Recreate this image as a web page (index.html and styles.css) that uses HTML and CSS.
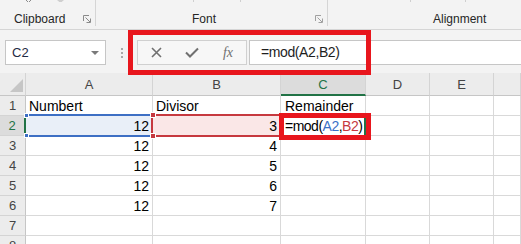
FILE: index.html
```html
<!DOCTYPE html>
<html lang="en">
<head>
  <meta charset="UTF-8" />
  <title>MOD formula</title>
  <link rel="stylesheet" href="styles.css">
</head>
<body>
  <div class="ribbon">
    <div class="group clip">
      <svg class="stub" width="95" height="4"><path d="M26 0 L28.5 2.5 L31 0" fill="none" stroke="#8a8a8a"/><path d="M57 0 H64 L60.5 3 Z" fill="#cfcfcf"/></svg>
      <div class="cap"><span>Clipboard</span><svg class="launch" width="8" height="8"><path d="M0.5 6V0.5H6" fill="none" stroke="#8a8a8a"/><path d="M2.5 2.5L7 7M3.5 7.5H7.5V3.5" fill="none" stroke="#8a8a8a"/></svg></div>
    </div>
    <div class="group font">
      <svg class="stub" width="231" height="4"><path d="M97.5 0V2M144.5 0V2" stroke="#cfcfcf"/></svg>
      <div class="cap"><span class="lbl-font">Font</span><svg class="launch" width="8" height="8"><path d="M0.5 6V0.5H6" fill="none" stroke="#a0a0a0"/><path d="M2.5 2.5L7 7M3.5 7.5H7.5V3.5" fill="none" stroke="#a0a0a0"/></svg></div>
    </div>
    <div class="group align">
      <svg class="stub" width="193" height="4"><path d="M82.5 0V2M137.5 0V2" stroke="#cfcfcf"/></svg>
      <div class="cap"><span class="lbl-align">Alignment</span></div>
    </div>
  </div>

  <div class="fbar">
    <div class="namebox"><span>C2</span><i class="caret"></i></div>
    <div class="grip"><i></i><i></i><i></i></div>
    <div class="btns">
      <span class="btn"><svg width="11" height="11"><path d="M1 1L10 10M10 1L1 10" stroke="#707070" stroke-width="1.6"/></svg></span>
      <span class="btn"><svg width="14" height="11"><path d="M1 5.5L5 9.5L13 1.5" fill="none" stroke="#707070" stroke-width="2"/></svg></span>
      <span class="btn fx">fx</span>
    </div>
    <div class="finput">=mod(A2,B2)</div>
    <div class="mark mark-bar"></div>
  </div>

  <div class="sheet">
    <div class="hd corner"><svg width="25" height="22"><path d="M10 19H23V6Z" fill="#c6c6c6"/></svg></div>
    <div class="hd">A</div>
    <div class="hd">B</div>
    <div class="hd on">C</div>
    <div class="hd">D</div>
    <div class="hd">E</div>
    <div class="hd"></div>

    <div class="rh">1</div>
    <div class="c">Numbert</div>
    <div class="c">Divisor</div>
    <div class="c cc">Remainder</div>
    <div class="c"></div><div class="c"></div><div class="c"></div>

    <div class="rh on">2</div>
    <div class="c num ref-a">12<i class="h tl"></i><i class="h bl"></i></div>
    <div class="c num ref-b">3<i class="h tl"></i><i class="h bl"></i></div>
    <div class="c cc edit">=mod(<span class="blue">A2</span>,<span class="red">B2</span>)</div>
    <div class="c"></div><div class="c"></div><div class="c"></div>

    <div class="rh">3</div>
    <div class="c num">12</div><div class="c num">4</div>
    <div class="c"></div><div class="c"></div><div class="c"></div><div class="c"></div>

    <div class="rh">4</div>
    <div class="c num">12</div><div class="c num">5</div>
    <div class="c"></div><div class="c"></div><div class="c"></div><div class="c"></div>

    <div class="rh">5</div>
    <div class="c num">12</div><div class="c num">6</div>
    <div class="c"></div><div class="c"></div><div class="c"></div><div class="c"></div>

    <div class="rh">6</div>
    <div class="c num">12</div><div class="c num">7</div>
    <div class="c"></div><div class="c"></div><div class="c"></div><div class="c"></div>

    <div class="rh">7</div>
    <div class="c"></div><div class="c"></div><div class="c"></div>
    <div class="c"></div><div class="c"></div><div class="c"></div>

    <div class="rh">8</div>
    <div class="c"></div><div class="c"></div><div class="c"></div>
    <div class="c"></div><div class="c"></div><div class="c"></div>

    <div class="mark mark-cell"></div>
  </div>
</body>
</html>
```

FILE: styles.css
```css
* { box-sizing: border-box; }
html, body { margin: 0; padding: 0; }
body {
  width: 521px;
  height: 244px;
  overflow: hidden;
  background: #f3f3f3;
  font-family: "Liberation Sans", Arial, sans-serif;
  color: #000;
}

/* ribbon */
.ribbon { display: flex; height: 30px; border-bottom: 1px solid #d5d5d5; }
.group { display: flex; flex-direction: column; height: 26px; border-right: 1px solid #d5d5d5; }
.group.clip { width: 96px; }
.group.font { width: 232px; }
.group.align { flex: 1; border-right: none; }
.stub { display: block; }
.cap {
  display: flex;
  align-items: center;
  height: 14px;
  margin-top: 10px;
  font-size: 12px;
  line-height: 14px;
  color: #262626;
}
.clip .cap { padding-left: 14px; }
.lbl-font { margin-left: 96px; }
.lbl-align { margin-left: 105px; }
.launch { margin-left: auto; margin-right: 4px; }

/* formula bar */
.fbar {
  position: relative;
  display: flex;
  align-items: flex-start;
  height: 43px;
  padding: 10px 0 0 5px;
}
.namebox {
  display: flex;
  align-items: center;
  width: 101px;
  height: 25px;
  padding: 0 6px 0 6px;
  background: #fff;
  border: 1px solid #c6c6c6;
  font-size: 13px;
  color: #1f2a44;
}
.caret {
  margin-left: auto;
  border-left: 4px solid transparent;
  border-right: 4px solid transparent;
  border-top: 4px solid #7a7a7a;
}
.grip { display: flex; flex-direction: column; gap: 2px; margin: 8px 0 0 15px; }
.grip i { display: block; width: 2px; height: 2px; background: #a8a8a8; }
.btns {
  display: flex;
  width: 110px;
  height: 25px;
  margin-left: 14px;
  background: #f7f7f7;
  border: 1px solid #d0d0d0;
}
.btn { display: flex; align-items: center; justify-content: center; width: 36px; }
.fx { font-family: "Liberation Serif", serif; font-style: italic; font-size: 14px; color: #707070; }
.finput {
  flex: 1;
  height: 25px;
  margin-left: 2px;
  padding-left: 11px;
  background: #fff;
  border: 1px solid #c6c6c6;
  border-right: none;
  font-size: 14px;
  line-height: 23px;
  letter-spacing: -0.4px;
  color: #1e1e1e;
}

/* annotation boxes */
.mark { position: absolute; border: 5px solid #e8161d; z-index: 5; }
.mark-bar { left: 128px; top: 0; width: 243px; height: 45px; }
.mark-cell { left: 279px; top: 40px; width: 92px; height: 27px; }

/* sheet */
.sheet {
  position: relative;
  display: grid;
  grid-template-columns: 26px 127px 128px 85px 64px 64px 1fr;
  grid-template-rows: 23px repeat(8, 20px);
  background: #fff;
}
.hd {
  background: #ececec;
  border-right: 1px solid #d4d4d4;
  border-bottom: 1px solid #c6c6c6;
  text-align: center;
  font-size: 13px;
  line-height: 20px;
  padding-top: 2px;
  color: #444;
}
.hd.corner { padding: 0; }
.hd.corner svg { display: block; }
.hd.on { background: #dcdcdc; color: #217346; border-bottom: 2px solid #217346; }
.rh {
  background: #ececec;
  border-right: 1px solid #c6c6c6;
  border-bottom: 1px solid #d4d4d4;
  text-align: center;
  font-size: 13px;
  line-height: 18px;
  padding-top: 1px;
  color: #444;
}
.rh.on { background: #dcdcdc; color: #217346; border-right: 2px solid #217346; }
.c {
  position: relative;
  border-right: 1px solid #d9d9d9;
  border-bottom: 1px solid #d9d9d9;
  padding: 1px 3px 0;
  font-size: 14px;
  line-height: 18px;
  white-space: nowrap;
}
.c.num { text-align: right; }
.c.cc { padding-left: 4px; }

.ref-a { background: #e9eff8; }
.ref-a::before {
  content: "";
  position: absolute;
  top: -2px; bottom: -2px; left: -1px; right: -1px;
  border-top: 2px solid #3d6fc4;
  border-bottom: 2px solid #3d6fc4;
}
.ref-b { background: #fae7e7; z-index: 2; }
.ref-b::before {
  content: "";
  position: absolute;
  top: -2px; bottom: -2px; left: -2px; right: -2px;
  border: 2px solid #c6393f;
}
.h { position: absolute; display: block; width: 5px; height: 5px; border: 1px solid #fff; z-index: 3; }
.ref-a .h { background: #3d6fc4; left: -2px; }
.ref-a .tl { top: -3px; }
.ref-a .bl { bottom: -3px; }
.ref-b .h { background: #c6393f; left: -3px; width: 6px; height: 6px; }
.ref-b .tl { top: -4px; }
.ref-b .bl { bottom: -4px; }

.edit { letter-spacing: -0.5px; z-index: 2; }
.edit::before {
  content: "";
  position: absolute;
  top: -2px; bottom: -2px; left: -2px; right: -1px;
  border: 2px solid #217346;
}
.blue { color: #3b70c6; }
.red { color: #c6393f; }
```
